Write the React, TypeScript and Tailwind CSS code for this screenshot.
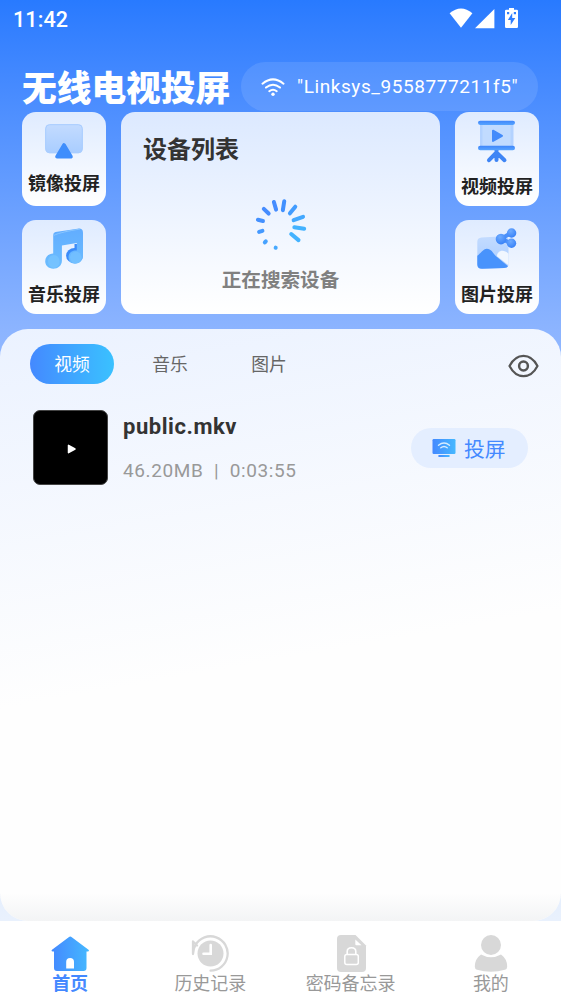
import type { ReactNode } from "react"
import clsx from "clsx"

function Gradients() {
  return (
    <svg className="absolute size-0" aria-hidden="true">
      <defs>
        <linearGradient id="accent" x1="0" y1="0" x2="1" y2="0">
          <stop offset="0" stopColor="#4489ff" />
          <stop offset="1" stopColor="#45b8ff" />
        </linearGradient>
        <linearGradient id="glass" x1="0" y1="0" x2="0" y2="1">
          <stop offset="0" stopColor="#c3dbff" />
          <stop offset="1" stopColor="#a9cdff" />
        </linearGradient>
        <linearGradient id="note" x1="0" y1="0" x2="0" y2="1">
          <stop offset="0" stopColor="#62adff" />
          <stop offset="1" stopColor="#6bbdff" />
        </linearGradient>
        <linearGradient id="solid" x1="0" y1="0" x2="0" y2="1">
          <stop offset="0" stopColor="#3f86fb" />
          <stop offset="1" stopColor="#57a4ff" />
        </linearGradient>
        <radialGradient id="ball" cx="0.4" cy="0.3" r="0.7">
          <stop offset="0" stopColor="#6eabff" />
          <stop offset="1" stopColor="#3982f7" />
        </radialGradient>
      </defs>
    </svg>
  )
}

function MirrorIcon() {
  return (
    <svg viewBox="0 0 84 58" className="h-[58px] w-[84px]">
      <rect x="23.2" y="12.2" width="37.6" height="29" rx="4.5" fill="url(#glass)" />
      <rect x="23.7" y="12.7" width="36.6" height="28" rx="4" fill="none" stroke="#a9cdff" strokeWidth="1" />
      <path d="M42 33 49 44.700H35Z" fill="#3f8efc" stroke="#3f8efc" strokeWidth="3.6" strokeLinejoin="round" />
    </svg>
  )
}

function MusicIcon() {
  return (
    <svg viewBox="0 0.7 84 58" className="h-[58px] w-[84px]">
      <ellipse cx="52.5" cy="36.4" rx="8.4" ry="7.6" fill="#3b8bfa" />
      <path d="M52.5 24.8h4.5v9h-4.5z" fill="#3b8bfa" />
      <path
        d="M31.2 15.8q0-2.3 2.3-3l22-3.4q5.5-.8 5.5 4.1v22.7c0 5-3.6 8.2-7.8 8.2-4 0-6.7-2.8-6.7-6.5 0-3.9 3-6.8 7-6.8h1.3V23.800l-14.900 2.400v15.200c0 4.8-4 8-8.6 8-4.7 0-8.1-3.1-8.1-7.4 0-4.6 3.6-7.8 8-7.8Z"
        fill="url(#note)"
      />
      <path d="M31.6 16.2c5-2.5 15-4.7 26.3-6.4" stroke="#89c5ff" strokeWidth="1" fill="none" />
      <ellipse cx="31.8" cy="42.1" rx="5.8" ry="6.5" fill="#7bc6ff" opacity=".65" />
      <ellipse cx="53.8" cy="38.2" rx="5.7" ry="6" fill="#7bc6ff" opacity=".5" />
    </svg>
  )
}

function BoardIcon() {
  return (
    <svg viewBox="0.5 0 84 58" className="h-[58px] w-[84px]">
      <path d="M42 38v10M42 40.5 34.5 48.2M42 40.5 50 48.2" stroke="#3f85f5" strokeWidth="4" strokeLinecap="round" />
      <rect x="25.5" y="11" width="33.5" height="26" fill="#b3d2ff" />
      <rect x="28" y="13" width="28" height="21" fill="#c1dbff" />
      <rect x="23.5" y="8.7" width="37" height="4.2" rx="2.1" fill="url(#solid)" />
      <rect x="23.5" y="33.8" width="37" height="4.4" rx="2.2" fill="url(#solid)" />
      <path d="M38.5 18.7v10.2l9-5.1Z" fill="#438bfb" stroke="#438bfb" strokeWidth="2" strokeLinejoin="round" />
    </svg>
  )
}

function PictureIcon() {
  return (
    <svg viewBox="0.5 0.7 84 58" className="h-[58px] w-[84px]">
      <path d="M27 18.2 49 17q5 0 5 4v24q0 3.5-4 3.7L27.5 49.5Q22.8 49.5 22.8 45V22.5Q22.8 18.5 27 18.2Z" fill="url(#glass)" />
      <path d="M42.5 37c0-5 6-8 11.5-2.5V46Z" fill="#f1f7ff" />
      <path d="M22.8 36.5c3-2 6-7 9.5-7 5 0 6 5 10.5 8.5L53.5 47q-1 1.7-4 1.8l-22 .7q-4.7 0-4.7-4.5Z" fill="#4893fc" />
      <path d="M46.5 19.5 57 13.5M46.5 19.5 57 24" stroke="#4b90fa" strokeWidth="4" />
      <circle cx="46.5" cy="19.8" r="5.3" fill="url(#ball)" />
      <circle cx="57.1" cy="13.7" r="4.7" fill="url(#ball)" />
      <circle cx="57" cy="24" r="4.7" fill="url(#ball)" />
    </svg>
  )
}

function CastCard({ label, icon, high }: { label: string; icon: ReactNode; high?: boolean }) {
  return (
    <div className="flex h-[94px] flex-col items-center overflow-hidden rounded-[14px] bg-linear-to-b from-[#dfebff] to-white">
      {icon}
      <span
        className={clsx(
          "text-[18px] leading-6 font-bold whitespace-nowrap text-[#222]",
          high ? "mt-0" : "mt-[3px]",
        )}
      >
        {label}
      </span>
    </div>
  )
}

// spokes run clockwise, shrinking towards the tail
const spokes = [
  { angle: 9, inner: 15, outer: 24, color: "#4190ff" },
  { angle: 39, inner: 15, outer: 23.5, color: "#429cff" },
  { angle: 70, inner: 14, outer: 24, color: "#43a8ff" },
  { angle: 99, inner: 14, outer: 24, color: "#43b2ff" },
  { angle: 130, inner: 14, outer: 23.5, color: "#43b2ff" },
  { angle: 192, inner: 23.1, outer: 23.3, color: "#46a9ff" },
  { angle: 222, inner: 22, outer: 23.4, color: "#46a2ff" },
  { angle: 252, inner: 19, outer: 22.5, color: "#4499ff" },
  { angle: 283, inner: 18, outer: 23.2, color: "#4491ff" },
  { angle: 314, inner: 16.5, outer: 23.2, color: "#458cff" },
  { angle: 344, inner: 16, outer: 24, color: "#458cff" },
]

function Spinner() {
  return (
    <svg viewBox="-26.5 -28 54 54" className="size-[54px]">
      {spokes.map((s) => (
        <line
          key={s.angle}
          x1="0"
          x2="0"
          y1={-s.inner}
          y2={-s.outer}
          stroke={s.color}
          strokeWidth="4"
          strokeLinecap="round"
          transform={`rotate(${s.angle})`}
        />
      ))}
    </svg>
  )
}

function StatusBar() {
  return (
    <div className="flex h-[38px] justify-between pt-[7px] pr-[42px] pl-[13px] text-white">
      <span className="font-[Roboto] text-[21.5px] leading-[26px] font-medium tracking-[0.1px]">11:42</span>
      <svg viewBox="0 0 70 22" className="h-[22px] w-[70px]" fill="#fff">
        <path d="M.6 6.2Q12-3.2 23.4 6.2L12 20.7Z" />
        <path d="M45.4 2v19.2H26Z" />
        <path
          fillRule="evenodd"
          d="M60 1h5v1.7h2.8q1.2 0 1.2 1.2v15.900q0 1.200-1.200 1.200H57.200Q56 21 56 19.800V3.900q0-1.200 1.200-1.200H60ZM58 5v2.300h2.200V5ZM64.800 5v2.300H67V5ZM63.200 6 58.900 13h2.800v5l4.600-7h-3.100Z"
        />
      </svg>
    </div>
  )
}

function Header() {
  return (
    <div className="mt-6 flex h-[50px] items-center justify-between pr-[23px] pl-[22px]">
      <h1 className="-mt-[2px] text-[34.7px] leading-[50px] font-black whitespace-nowrap text-white">无线电视投屏</h1>
      <div className="-mt-px flex h-[49px] w-[297px] shrink-0 items-center rounded-full bg-white/10 pl-5 text-white">
        <svg viewBox="0 0 24 20" className="h-5 w-6" fill="none" stroke="#fff" strokeWidth="2" strokeLinecap="round">
          <path d="M1.5 6.7Q12-2 22.5 6.7M5 10.6q7-5.8 14 0M8.3 14.2q3.7-2.9 7.4 0" />
          <circle cx="12" cy="17.2" r="1.7" fill="#fff" stroke="none" />
        </svg>
        <span className="mt-[2px] ml-3 font-[Roboto] text-[19px] tracking-[0.58px] whitespace-nowrap">
          "Linksys_9558777211f5"
        </span>
      </div>
    </div>
  )
}

function Tabs() {
  return (
    <div className="flex h-10 items-center pl-[30px] text-[17.8px] text-[#666]">
      <span className="flex h-10 w-[84px] items-center justify-center rounded-full bg-linear-to-r from-[#4489ff] to-[#3ac1ff] pb-px text-white">
        视频
      </span>
      <span className="ml-[14px] w-[84px] pb-px text-center">音乐</span>
      <span className="ml-[15px] w-[84px] pb-px text-center">图片</span>
      <svg viewBox="0 0 32 24" className="mt-1 mr-[22px] ml-auto h-6 w-8" fill="none" stroke="#555" strokeWidth="2.2">
        <path d="M2.5 12C9.5-1.5 23.5-1.5 30.5 12 23.5 25.5 9.5 25.5 2.5 12Z" strokeLinejoin="round" />
        <circle cx="16.5" cy="12" r="4.4" strokeWidth="2.5" />
      </svg>
    </div>
  )
}

function MediaRow() {
  return (
    <div className="mt-[27px] flex pr-[33px] pl-[33px]">
      <div className="-mt-px flex size-[75px] shrink-0 items-center justify-center rounded-[7px] border border-[#444] bg-black">
        <svg viewBox="0 0 10 10" className="mt-[2px] ml-[2px] size-[10px]">
          <path d="M1.500 1.300v7.400L8 5Z" fill="#fff" stroke="#fff" strokeWidth="1.5" strokeLinejoin="round" />
        </svg>
      </div>
      <div className="ml-[15px] font-[Roboto]">
        <p className="mt-[2px] text-[22px] leading-7 font-bold tracking-[0.55px] text-[#333]">public.mkv</p>
        <p className="mt-[18px] text-[19px] leading-6 tracking-[0.6px] whitespace-pre text-[#999]">46.20MB  |  0:03:55</p>
      </div>
      <button className="mt-[17px] ml-auto flex h-10 w-[117px] items-center rounded-full bg-[#e4eeff] pl-[21px] text-[20.8px] text-[#4489ff]">
        <svg viewBox="0 0 24 20" className="h-5 w-6" fill="none">
          <rect x=".5" y="1" width="23" height="15" rx="1.2" fill="url(#accent)" />
          <rect x="6.2" y="17" width="11.6" height="2" rx="1" fill="url(#accent)" />
          <path d="M6.5 7.3q5.5-4.6 11 0M8.8 9.8q3.2-2.7 6.4 0" stroke="#d5ecff" strokeWidth="1.4" strokeLinecap="round" />
        </svg>
        <span className="mt-px ml-2">投屏</span>
      </button>
    </div>
  )
}

const navItems = [
  {
    label: "首页",
    icon: (
      <>
        <path
          d="M17.7 2.2 1 14.8Q-.2 16.5 1.8 16.5H3V33Q3 36 6 36h26.5Q35.5 36 35.5 33V16.5h1.2q2 0 .8-1.7L20.8 2.2q-1.5-1.2-3.1 0Z"
          fill="url(#accent)"
        />
        <path d="M15.2 33.5V27q0-4 3.9-4t3.9 4v6.5Z" fill="#fff" />
      </>
    ),
  },
  {
    label: "历史记录",
    icon: (
      <>
        <circle cx="19.5" cy="18.5" r="13" fill="#d8d8d8" />
        <path
          d="M19.5 35.7a17.2 17.2 0 1 0-15-25.7C3 12.5 2.2 15.5 2 19V6.5l4 4"
          fill="none"
          stroke="#d8d8d8"
          strokeWidth="2.3"
          strokeLinecap="round"
          strokeLinejoin="round"
        />
        <path d="M19.7 10v8.8h-7.2" fill="none" stroke="#fff" strokeWidth="2.6" strokeLinecap="round" />
      </>
    ),
  },
  {
    label: "密码备忘录",
    icon: (
      <>
        <path d="M9 0H23.5L34 10.5V33q0 4-4 4H9q-4 0-4-4V4q0-4 4-4Z" fill="#d8d8d8" />
        <path d="M23.3 4.5v4.8q0 1 1 1h5.2Z" fill="#fff" />
        <path d="M15.2 19.5v-3q0-3.8 4.3-3.8t4.3 3.8v3" fill="none" stroke="#fff" strokeWidth="1.6" />
        <rect x="12.8" y="19.5" width="13.5" height="10" rx="2" fill="none" stroke="#fff" strokeWidth="1.5" />
      </>
    ),
  },
  {
    label: "我的",
    icon: (
      <>
        <circle cx="19" cy="10" r="10" fill="#d8d8d8" />
        <path d="M9 19.5q10 5.5 20 0Q35.2 24 35.2 31.5q0 2.5-2.2 3.3-14 4-28 0-2.2-.8-2.2-3.3Q2.8 24 9 19.5Z" fill="#d8d8d8" />
      </>
    ),
  },
]

function BottomNav() {
  return (
    <nav className="grid h-[78px] grid-cols-4 bg-white pt-[14px]">
      {navItems.map((item, i) => (
        <div key={item.label} className="flex flex-col items-center">
          <svg viewBox="0 0 38 37" className="h-[37px] w-[38px]">
            {item.icon}
          </svg>
          <span
            className={clsx(
              "-mt-px text-[18px] leading-[22px] whitespace-nowrap",
              i === 0 ? "font-bold text-[#4489ff]" : "text-[#999]",
            )}
          >
            {item.label}
          </span>
        </div>
      ))}
    </nav>
  )
}

export default function App() {
  return (
    <div className="flex h-[999px] w-[561px] flex-col overflow-hidden bg-linear-to-b from-[#287aff] via-[#8cb4ff] via-[33%] to-[#e9f1fd] to-[92%] font-['Noto_Sans_CJK_SC',sans-serif]">
      <Gradients />
      <StatusBar />
      <Header />
      <div className="grid grid-cols-[84px_319px_84px] gap-x-[15px] pl-[22px]">
        <div className="grid gap-[14px]">
          <CastCard label="镜像投屏" icon={<MirrorIcon />} high />
          <CastCard label="音乐投屏" icon={<MusicIcon />} />
        </div>
        <div className="flex h-[202px] flex-col items-center rounded-[14px] bg-linear-to-b from-[#dce9ff] to-white">
          <h2 className="mt-5 self-start pl-[22px] text-[24px] leading-8 font-bold text-[#333]">设备列表</h2>
          <div className="mt-[33px]">
            <Spinner />
          </div>
          <p className="mt-[14px] text-[19.6px] leading-7 font-bold text-[#808080]">正在搜索设备</p>
        </div>
        <div className="grid gap-[14px]">
          <CastCard label="视频投屏" icon={<BoardIcon />} />
          <CastCard label="图片投屏" icon={<PictureIcon />} />
        </div>
      </div>
      <main className="mt-[15px] flex h-[592px] flex-col justify-between overflow-hidden rounded-[28px] bg-linear-[170deg] from-[#ebf2ff] to-[#fefefe] to-[55%] pt-[15px]">
        <div>
          <Tabs />
          <MediaRow />
        </div>
        <div className="h-7 bg-linear-to-b from-transparent to-[#f3f4f5]" />
      </main>
      <BottomNav />
    </div>
  )
}
